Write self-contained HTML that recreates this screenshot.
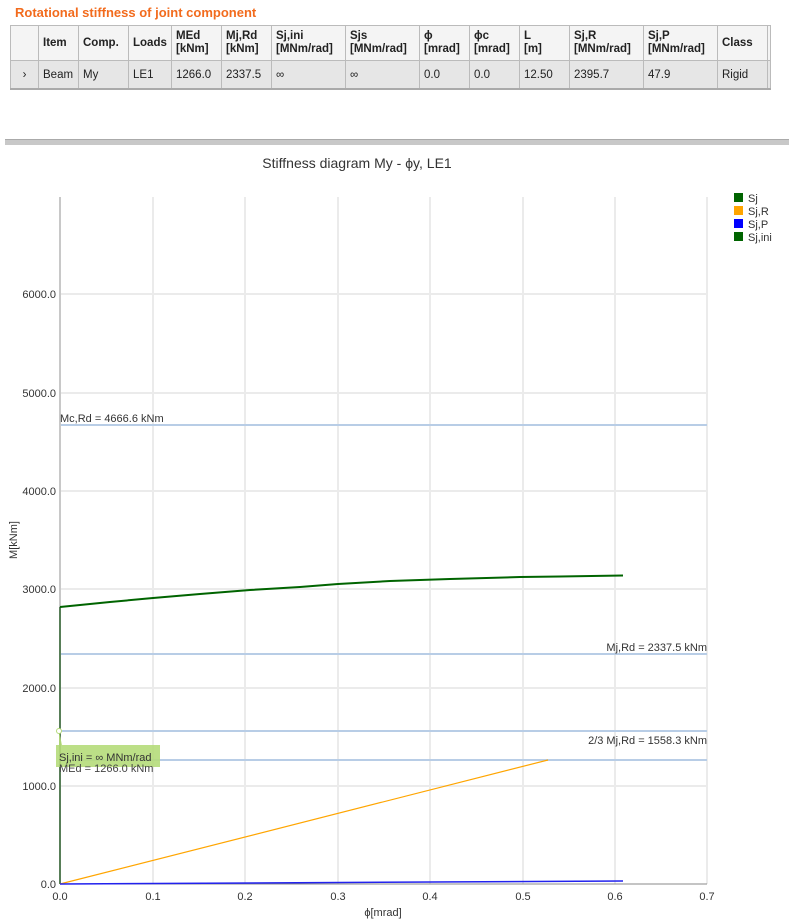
<!DOCTYPE html>
<html><head><meta charset="utf-8"><style>
body{margin:0;width:794px;height:923px;background:#fff;font-family:"Liberation Sans",sans-serif;position:relative;overflow:hidden}
.title{position:absolute;left:15px;top:5px;color:#f26b1d;font-weight:bold;font-size:13px}
table{position:absolute;left:10px;top:25px;border-collapse:collapse;font-size:11.5px;color:#222;border:1px solid #aaa;border-bottom:2px solid #aaa}
td{border:1px solid #bbb;padding:0 4px;vertical-align:middle}
tr.h td{height:34px;background:#f4f4f4;font-weight:bold;line-height:13px}
tr.d td{height:27px;background:#e6e6e6}
.sep{position:absolute;left:5px;top:139px;width:784px;height:6px;background:#c8c8c8;border-top:1px solid #aaa;box-sizing:border-box}
svg{position:absolute;left:0;top:0}
</style></head><body>
<div class="title">Rotational stiffness of joint component</div>
<table>
<tr class="h"><td style="width:19px"></td><td style="width:31px">Item</td><td style="width:41px">Comp.</td><td style="width:34px">Loads</td><td style="width:41px">MEd<br>[kNm]</td><td style="width:41px">Mj,Rd<br>[kNm]</td><td style="width:65px">Sj,ini<br>[MNm/rad]</td><td style="width:65px">Sjs<br>[MNm/rad]</td><td style="width:41px">ϕ<br>[mrad]</td><td style="width:41px">ϕc<br>[mrad]</td><td style="width:41px">L<br>[m]</td><td style="width:65px">Sj,R<br>[MNm/rad]</td><td style="width:65px">Sj,P<br>[MNm/rad]</td><td style="width:41px">Class</td><td style="width:0;padding:0 1px"></td></tr>
<tr class="d"><td style="text-align:center">›</td><td>Beam</td><td>My</td><td>LE1</td><td>1266.0</td><td>2337.5</td><td>∞</td><td>∞</td><td>0.0</td><td>0.0</td><td>12.50</td><td>2395.7</td><td>47.9</td><td>Rigid</td><td style="padding:0 1px"></td></tr>
</table>
<div class="sep"></div>
<svg width="794" height="923" font-family="Liberation Sans, sans-serif">
<text x="357" y="168" font-size="14" fill="#333" text-anchor="middle">Stiffness diagram My - ϕy, LE1</text>
<g stroke="#ebebeb" stroke-width="2">
<line x1="153" y1="197" x2="153" y2="884"/><line x1="245" y1="197" x2="245" y2="884"/><line x1="338" y1="197" x2="338" y2="884"/><line x1="430" y1="197" x2="430" y2="884"/><line x1="523" y1="197" x2="523" y2="884"/><line x1="615" y1="197" x2="615" y2="884"/><line x1="707" y1="197" x2="707" y2="884"/>
<line x1="60" y1="294" x2="707" y2="294"/><line x1="60" y1="393" x2="707" y2="393"/><line x1="60" y1="491" x2="707" y2="491"/><line x1="60" y1="589" x2="707" y2="589"/><line x1="60" y1="688" x2="707" y2="688"/><line x1="60" y1="786" x2="707" y2="786"/>
</g>
<g stroke="#b8cde6" stroke-width="2">
<line x1="60" y1="425" x2="707" y2="425"/><line x1="60" y1="654" x2="707" y2="654"/><line x1="60" y1="731" x2="707" y2="731"/><line x1="60" y1="760" x2="707" y2="760"/>
</g>
<line x1="60" y1="197" x2="60" y2="884" stroke="#c8c8c8" stroke-width="2"/>
<line x1="60" y1="884" x2="707" y2="884" stroke="#888" stroke-width="1"/>
<line x1="60" y1="607" x2="60" y2="884" stroke="#336633" stroke-width="1.5"/>
<polyline fill="none" stroke="#006400" stroke-width="2" points="60,607 110,602 153,598 200,594 250,590 300,587 338,584 390,581 450,579 520,577 560,576.5 623,575.5"/>
<line x1="60" y1="884" x2="548" y2="760" stroke="#ffa500" stroke-width="1.2"/>
<line x1="60" y1="884" x2="623" y2="881" stroke="#2222ee" stroke-width="1.5"/>
<g font-size="11" fill="#333">
<text x="56" y="298" text-anchor="end">6000.0</text><text x="56" y="397" text-anchor="end">5000.0</text><text x="56" y="495" text-anchor="end">4000.0</text><text x="56" y="593" text-anchor="end">3000.0</text><text x="56" y="692" text-anchor="end">2000.0</text><text x="56" y="790" text-anchor="end">1000.0</text><text x="56" y="888" text-anchor="end">0.0</text>
<text x="60" y="900" text-anchor="middle">0.0</text><text x="153" y="900" text-anchor="middle">0.1</text><text x="245" y="900" text-anchor="middle">0.2</text><text x="338" y="900" text-anchor="middle">0.3</text><text x="430" y="900" text-anchor="middle">0.4</text><text x="523" y="900" text-anchor="middle">0.5</text><text x="615" y="900" text-anchor="middle">0.6</text><text x="707" y="900" text-anchor="middle">0.7</text>
<text x="383" y="916" text-anchor="middle">ϕ[mrad]</text>
<text transform="translate(17,540) rotate(-90)" text-anchor="middle">M[kNm]</text>
<text x="60" y="422">Mc,Rd = 4666.6 kNm</text>
<text x="707" y="651" text-anchor="end">Mj,Rd = 2337.5 kNm</text>
<text x="707" y="744" text-anchor="end">2/3 Mj,Rd = 1558.3 kNm</text>
</g>
<path d="M59,731 L62,745 L160,745 L160,767 L56,767 L56,745 L59,745Z" fill="#b5db7a" opacity="0.9"/>
<circle cx="59" cy="731" r="2.5" fill="#fff" stroke="#b5db7a"/>
<text x="59" y="761" font-size="11" fill="#333">Sj,ini = ∞ MNm/rad</text>
<text x="59" y="772" font-size="11" fill="#444">MEd = 1266.0 kNm</text>
<g font-size="11" fill="#333">
<rect x="734" y="193" width="9" height="9" fill="#006400"/><text x="748" y="202">Sj</text>
<rect x="734" y="206" width="9" height="9" fill="#ffa500"/><text x="748" y="215">Sj,R</text>
<rect x="734" y="219" width="9" height="9" fill="#0000ff"/><text x="748" y="228">Sj,P</text>
<rect x="734" y="232" width="9" height="9" fill="#006400"/><text x="748" y="241">Sj,ini</text>
</g>
</svg>
</body></html>
